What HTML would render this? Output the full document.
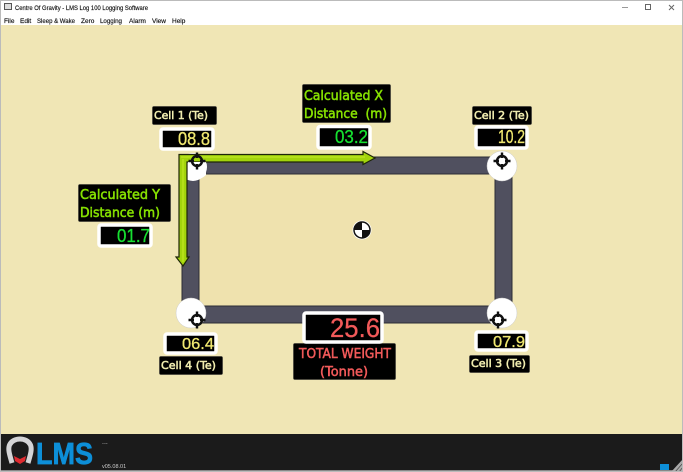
<!DOCTYPE html>
<html>
<head>
<meta charset="utf-8">
<style>
html,body{margin:0;padding:0;width:683px;height:472px;overflow:hidden;background:#f0e6b5}
svg{display:block;font-family:"Liberation Sans",sans-serif}
.lab{font-family:"DejaVu Sans","Liberation Sans",sans-serif;font-weight:400;stroke-width:.55}
.dig{font-family:"Liberation Sans",sans-serif;font-weight:400;stroke-width:.3}
</style>
</head>
<body>
<svg width="683" height="472" viewBox="0 0 683 472" xmlns="http://www.w3.org/2000/svg">
<defs>
<filter id="b" x="-5%" y="-20%" width="110%" height="140%"><feGaussianBlur stdDeviation="0.35"/></filter>
<g id="ch">
<circle cx="0" cy="0" r="5" fill="none" stroke="#111" stroke-width="2.400"/>
<path d="M0-8.500V-3M0 3V8.500M-8.500 0H-3M3 0H8.500" stroke="#111" stroke-width="2.400"/>
</g>
</defs>
<!-- window -->
<rect x="0" y="0" width="683" height="25" fill="#fff"/>
<rect x="0" y="25" width="683" height="409" fill="#f0e6b5"/>
<g filter="url(#b)">
<rect x="4.500" y="3.500" width="7" height="6" fill="#ddd" stroke="#555"/>
<text x="15" y="10" font-size="6.500" fill="#111" textLength="133" lengthAdjust="spacingAndGlyphs" stroke="#111" stroke-width=".15">Centre Of Gravity - LMS Log 100 Logging Software</text>
<g font-size="6.500" fill="#111" stroke="#111" stroke-width=".15">
<text x="4" y="23">File</text><text x="20" y="23">Edit</text><text x="37" y="23" textLength="38" lengthAdjust="spacingAndGlyphs">Sleep &amp; Wake</text>
<text x="81" y="23">Zero</text><text x="100" y="23" textLength="22" lengthAdjust="spacingAndGlyphs">Logging</text><text x="129" y="23">Alarm</text>
<text x="152" y="23">View</text><text x="172" y="23">Help</text>
</g>
</g>
<path d="M622 7.500H628" stroke="#999"/>
<rect x="645.500" y="4.500" width="5" height="5" fill="none" stroke="#666"/>
<path d="M669 5L674 10M674 5L669 10" stroke="#666"/>

<!-- frame -->
<rect x="190.500" y="165.500" width="313" height="149" fill="#efe2ae" stroke="#2d2d35" stroke-width="18"/>
<rect x="190.500" y="165.500" width="313" height="149" fill="none" stroke="#50505f" stroke-width="16"/>
<!-- corner circles -->
<circle cx="502" cy="166" r="15" fill="#fff" stroke="#ccc" stroke-width="0.500"/>
<circle cx="191" cy="313" r="15" fill="#fff" stroke="#ccc" stroke-width="0.500"/>
<circle cx="502" cy="313" r="15" fill="#fff" stroke="#ccc" stroke-width="0.500"/>
<circle cx="193" cy="167" r="14" fill="#fff"/>
<!-- arrows -->
<path d="M179 154.500H363V151.500L375 158L363 164.500V162H187V257H189L183 266L176 257H179Z" fill="#a2d40c" stroke="#1e2608" stroke-width="1.200"/>
<path d="M181 157H365M183 159V262" stroke="#bfe820" stroke-width="1.500" fill="none" opacity=".8"/>
<path d="M188 162H206V175C200 181 192 180 188 176Z" fill="#fff"/>
<!-- crosshairs -->
<use href="#ch" x="197" y="161"/>
<use href="#ch" x="502" y="161"/>
<use href="#ch" x="197" y="320"/>
<use href="#ch" x="498" y="320"/>
<!-- CoG -->
<circle cx="362" cy="230" r="9.500" fill="#fff"/>
<circle cx="362" cy="230" r="8" fill="#fff" stroke="#111" stroke-width="1.500"/>
<path d="M362 230V222A8 8 0 0 0 354 230ZM362 230V238A8 8 0 0 0 370 230Z" fill="#111"/>

<!-- labels -->
<g fill="#000" stroke="#2a2a2a" stroke-width=".5">
<rect x="152.500" y="106.500" width="64" height="18" rx="1"/>
<rect x="302.500" y="84.500" width="88" height="38" rx="1"/>
<rect x="472.500" y="106.500" width="59" height="18" rx="1"/>
<rect x="78.500" y="184.500" width="92" height="37" rx="1"/>
<rect x="159.500" y="356.500" width="63" height="18" rx="1"/>
<rect x="469.500" y="355.500" width="60" height="17" rx="1"/>
<rect x="293.500" y="343.500" width="102" height="36" rx="1"/>
</g>
<!-- displays -->
<g fill="#000" stroke="#fff" stroke-width="3.500">
<rect x="161" y="129" width="52" height="20" rx="2"/>
<rect x="318" y="126.500" width="52" height="21.500" rx="2"/>
<rect x="476" y="127" width="51" height="21" rx="2"/>
<rect x="99" y="225" width="52" height="21" rx="2"/>
<rect x="165" y="334" width="51" height="19" rx="2"/>
<rect x="476" y="332" width="51" height="18" rx="2"/>
<rect x="304" y="313" width="78" height="29" rx="2"/>
</g>
<g filter="url(#b)">
<g class="lab" font-size="11" fill="#f2eeb0" stroke="#f2eeb0">
<text x="154" y="119" textLength="54" lengthAdjust="spacingAndGlyphs">Cell 1 (Te)</text>
<text x="474" y="119" textLength="55" lengthAdjust="spacingAndGlyphs">Cell 2 (Te)</text>
<text x="161" y="369" textLength="55" lengthAdjust="spacingAndGlyphs">Cell 4 (Te)</text>
<text x="471" y="367" textLength="55" lengthAdjust="spacingAndGlyphs">Cell 3 (Te)</text>
</g>
<g class="lab" font-size="13" fill="#86e000" stroke="#86e000">
<text x="304" y="100" textLength="79" lengthAdjust="spacingAndGlyphs">Calculated X</text>
<text x="304" y="118" xml:space="preserve" textLength="83" lengthAdjust="spacingAndGlyphs">Distance  (m)</text>
<text x="80" y="199" textLength="80" lengthAdjust="spacingAndGlyphs">Calculated Y</text>
<text x="80" y="217" textLength="80" lengthAdjust="spacingAndGlyphs">Distance (m)</text>
</g>
<g class="lab" font-size="13" fill="#f25a5a" stroke="#f25a5a">
<text x="299" y="358" textLength="92" lengthAdjust="spacingAndGlyphs">TOTAL WEIGHT</text>
<text x="320" y="376" textLength="48" lengthAdjust="spacingAndGlyphs">(Tonne)</text>
</g>
<g class="dig" font-size="18">
<text x="178" y="145" fill="#f0e870" stroke="#f0e870" textLength="32" lengthAdjust="spacingAndGlyphs">08.8</text>
<text x="335" y="143" fill="#16e030" stroke="#16e030" textLength="33" lengthAdjust="spacingAndGlyphs">03.2</text>
<text x="498" y="143" fill="#f0e870" stroke="#f0e870" textLength="27" lengthAdjust="spacingAndGlyphs">10.2</text>
<text x="117" y="242" fill="#16e030" stroke="#16e030" textLength="33" lengthAdjust="spacingAndGlyphs">01.7</text>
<text x="182" y="349" font-size="16" fill="#f0e870" stroke="#f0e870" textLength="32" lengthAdjust="spacingAndGlyphs">06.4</text>
<text x="493" y="347" font-size="16" fill="#f0e870" stroke="#f0e870" textLength="32" lengthAdjust="spacingAndGlyphs">07.9</text>
</g>
<text x="330" y="337" class="dig" font-size="27" fill="#f25a5a" stroke="#f25a5a" stroke-width=".6" textLength="50" lengthAdjust="spacingAndGlyphs">25.6</text>
</g>

<!-- footer -->
<rect x="0" y="434" width="683" height="36" fill="#1b1b1b"/>
<rect x="0" y="470" width="683" height="2" fill="#888"/>
<path d="M12 463C9 453 8 449 9.500 445C13 437 27 437 30.500 445C32 449 31 453 28 463" fill="none" stroke="#d4d4d6" stroke-width="5"/>
<path d="M14 456L20 459L26 456L25 461L20 464L15 461Z" fill="#e02b30"/>
<text x="36" y="464" font-size="31" font-weight="700" fill="#0d8fd8" stroke="#0d8fd8" stroke-width=".7" textLength="57" lengthAdjust="spacingAndGlyphs">LMS</text>
<g filter="url(#b)">
<text x="102" y="444" font-size="7" fill="#ccc">...</text>
<text x="102" y="468" font-size="5.500" fill="#ccc">v05.08.01</text>
</g>
<rect x="660" y="464" width="9" height="6" fill="#0d8fd8"/>
<path d="M671 472L683 459V472Z" fill="#aaa"/>
<path d="M675 472L683 463M679 472L683 467" stroke="#444" stroke-width=".7"/>
<rect x="0.500" y="0.500" width="682" height="471" fill="none" stroke="#bbb" stroke-width="1"/>
</svg>
</body>
</html>
